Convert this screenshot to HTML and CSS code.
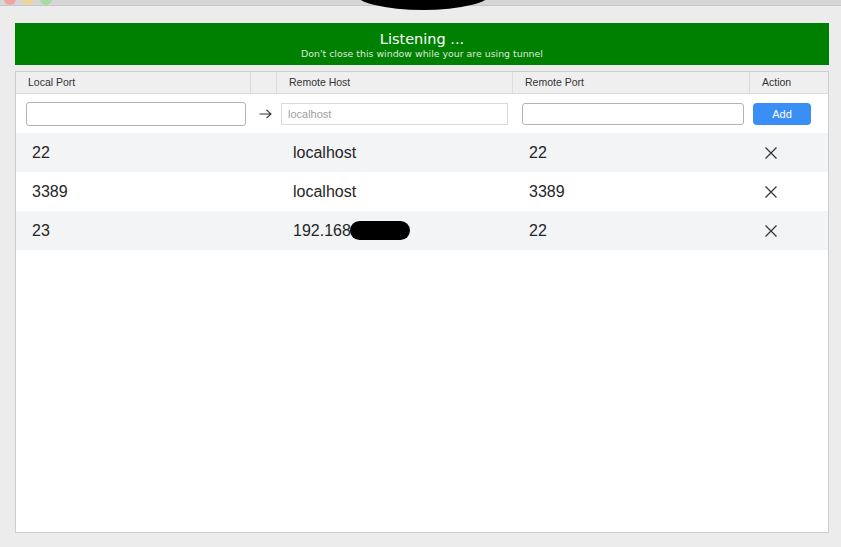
FILE: index.html
```html
<!DOCTYPE html>
<html>
<head>
<meta charset="utf-8">
<link rel="stylesheet" href="styles.css">
</head>
<body>
<div class="titlebar">
  <div class="lights"><span class="light red"></span><span class="light yellow"></span><span class="light green"></span></div>
  <span class="redact-title"></span>
</div>
<main class="page">
  <header class="banner">
    <div class="banner-title">Listening ...</div>
    <div class="banner-sub">Don't close this window while your are using tunnel</div>
  </header>
  <section class="table">
    <div class="row head">
      <div class="hcell">Local Port</div>
      <div class="hcell"></div>
      <div class="hcell">Remote Host</div>
      <div class="hcell">Remote Port</div>
      <div class="hcell last">Action</div>
    </div>
    <div class="row form">
      <div class="fcell c1"><input class="field" type="text"></div>
      <div class="fcell c2"><svg class="arrow" width="13" height="10" viewBox="0 0 13 10"><path d="M0.5 5H12M7.5 0.8L12 5L7.5 9.2" fill="none" stroke="#333" stroke-width="1.1"/></svg></div>
      <div class="fcell c3"><input class="field host" type="text" placeholder="localhost"></div>
      <div class="fcell c4"><input class="field port" type="text"></div>
      <div class="fcell c5"><button class="add">Add</button></div>
    </div>
    <div class="row data alt">
      <div class="dcell">22</div><div></div><div class="dcell">localhost</div><div class="dcell">22</div>
      <div class="dcell act"><svg class="x" width="14" height="14" viewBox="0 0 14 14"><path d="M1.5 1.5L12.5 12.5M12.5 1.5L1.5 12.5" stroke="#333" stroke-width="1.2"/></svg></div>
    </div>
    <div class="row data">
      <div class="dcell">3389</div><div></div><div class="dcell">localhost</div><div class="dcell">3389</div>
      <div class="dcell act"><svg class="x" width="14" height="14" viewBox="0 0 14 14"><path d="M1.5 1.5L12.5 12.5M12.5 1.5L1.5 12.5" stroke="#333" stroke-width="1.2"/></svg></div>
    </div>
    <div class="row data alt">
      <div class="dcell">23</div><div></div><div class="dcell">192.168<span class="redact"></span></div><div class="dcell">22</div>
      <div class="dcell act"><svg class="x" width="14" height="14" viewBox="0 0 14 14"><path d="M1.5 1.5L12.5 12.5M12.5 1.5L1.5 12.5" stroke="#333" stroke-width="1.2"/></svg></div>
    </div>
  </section>
</main>
</body>
</html>
```
FILE: styles.css
```css
html, body { margin: 0; padding: 0; }
body {
  background: #ececec;
  font-family: "Liberation Sans", Arial, sans-serif;
  color: #222;
  width: 841px;
  height: 547px;
  overflow: hidden;
  position: relative;
}
.titlebar {
  height: 5px;
  background: #d6d6d6;
  border-bottom: 1px solid #c8c8c8;
  position: relative;
  z-index: 2;
}
.lights {
  display: flex;
  gap: 6px;
  padding-left: 4px;
  height: 5px;
  overflow: hidden;
  align-items: flex-end;
}
.light { width: 12px; height: 12px; border-radius: 50%; display: block; flex: none; }
.red { background: #f0a5a0; }
.yellow { background: #f0d59a; }
.green { background: #a8dca3; }
.redact-title {
  position: absolute;
  left: 355px;
  top: -14px;
  width: 136px;
  height: 24px;
  background: #000;
  border-radius: 40% 40% 50% 50% / 30% 30% 70% 70%;
}
.page { padding: 17px 12px 0 15px; }
.banner {
  background: #008000;
  height: 42px;
  color: #fff;
  text-align: center;
  font-family: "DejaVu Sans", Verdana, sans-serif;
  display: flex;
  flex-direction: column;
  justify-content: center;
}
.banner-title { font-size: 14.5px; line-height: 17px; margin-top: 1px; }
.banner-sub { font-size: 9.4px; line-height: 11px; color: #dfe9df; }
.table {
  margin-top: 6px;
  height: 460px;
  border: 1px solid #cdcdcd;
  background: #fff;
}
.row {
  display: grid;
  grid-template-columns: 235px 26px 236px 237px 78px;
}
.head {
  height: 21px;
  background: #efefef;
  border-bottom: 1px solid #dcdcdc;
}
.hcell {
  font-size: 10.5px;
  color: #333;
  padding-left: 12px;
  line-height: 21px;
  border-right: 1px solid #dcdcdc;
}
.hcell.last { border-right: none; }
.form { height: 39px; align-items: center; }
.fcell { display: flex; align-items: center; }
.c1 { padding: 0 5px 0 10px; }
.c2 { justify-content: center; padding-left: 3px; }
.c3 { padding: 0 5px 0 4px; }
.c4 { padding: 0 6px 0 9px; }
.c5 { padding-left: 3px; }
.field {
  box-sizing: border-box;
  width: 100%;
  height: 24px;
  border: 1px solid #b3b3b3;
  border-radius: 3px;
  background: #fff;
  font-family: "Liberation Sans", Arial, sans-serif;
  font-size: 11px;
  padding: 0 6px;
  margin: 0;
}
.field.host { height: 22px; border-color: #dadada; border-radius: 0; }
.field.port { height: 22px; }
.field::placeholder { color: #a0a0a0; }
.add {
  width: 58px;
  height: 22px;
  border: none;
  border-radius: 4px;
  background: #3a8ff7;
  color: #fff;
  font-family: "Liberation Sans", Arial, sans-serif;
  font-size: 11px;
  padding: 0;
}
.data { height: 39px; align-items: center; }
.data.alt { background: #f3f4f5; }
.dcell { font-size: 16px; padding-left: 16px; color: #262626; display: flex; align-items: center; }
.dcell.act { padding-left: 14px; }
.redact {
  display: inline-block;
  width: 60px;
  height: 19px;
  background: #000;
  border-radius: 10px;
  margin-left: -1px;
}
```
